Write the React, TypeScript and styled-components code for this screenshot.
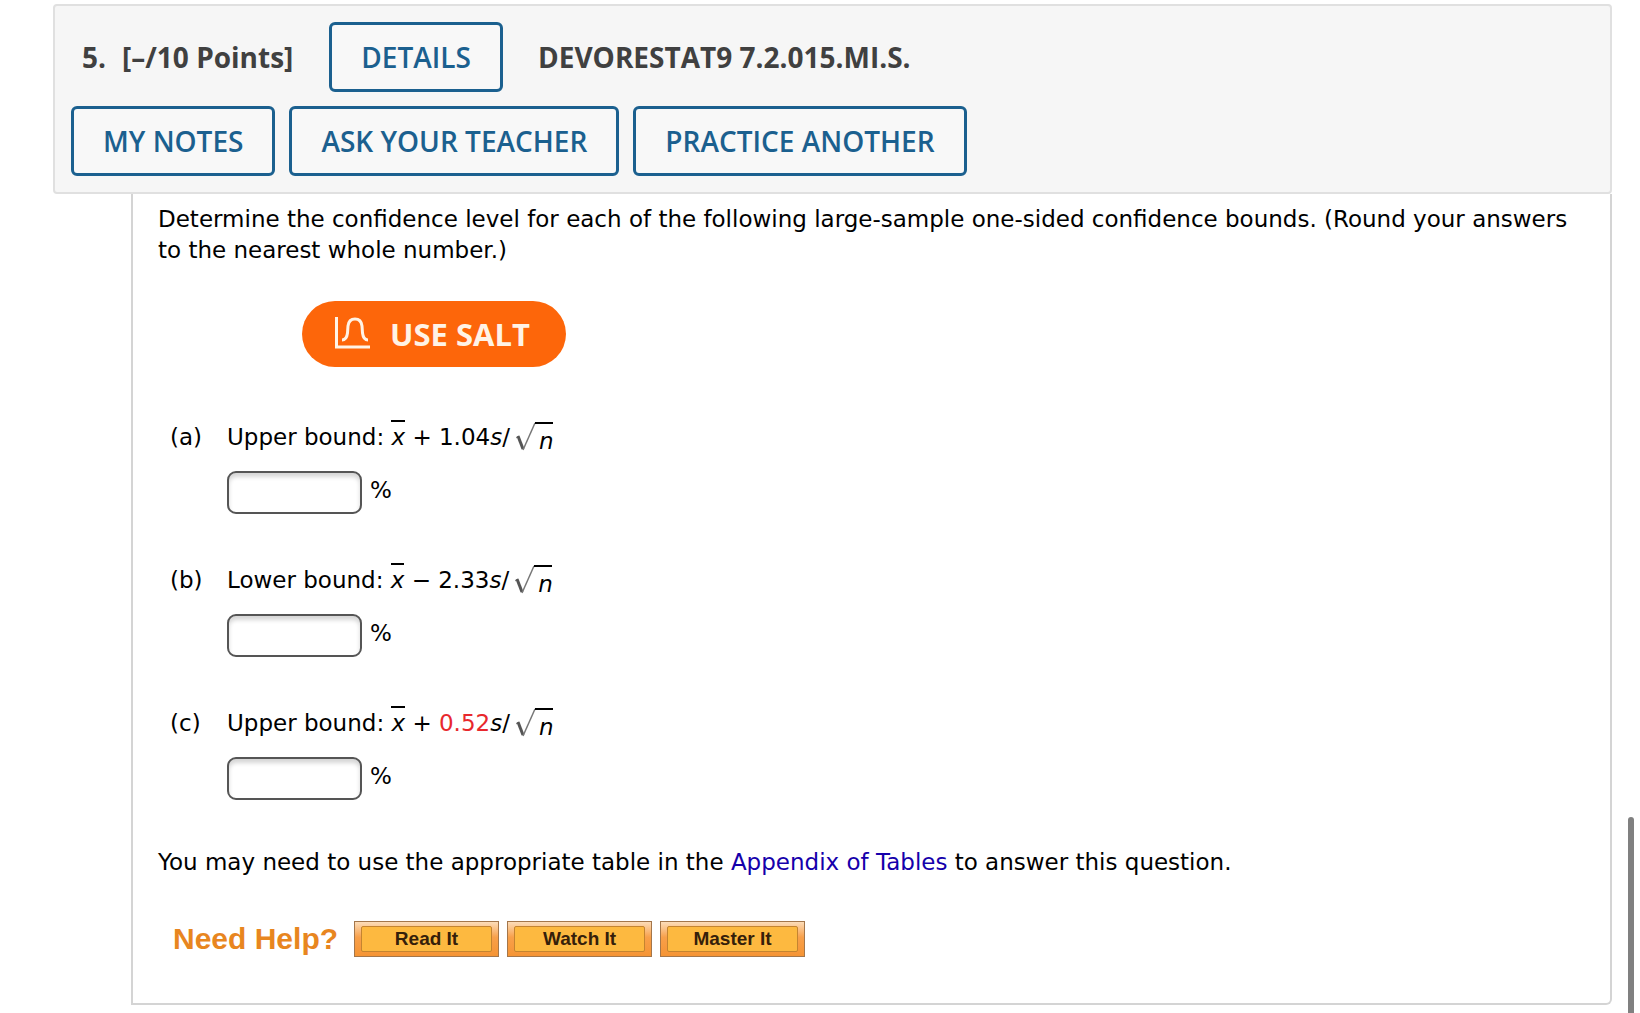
import React, { useId } from "react";
import styled, { createGlobalStyle } from "styled-components";

const GlobalStyle = createGlobalStyle`
  *, *::before, *::after { box-sizing: border-box; }
  body {
    margin: 0;
    background: #fff;
    color: #000;
    font: 23px/31px Verdana, "DejaVu Sans", sans-serif;
  }
`;

const Page = styled.main`
  padding: 4px 28px 8px 53px;
`;

const Header = styled.header`
  display: flex;
  flex-direction: column;
  gap: 14px;
  padding: 16px;
  border: 2px solid #e0e0e0;
  border-radius: 4px;
  background: #f6f6f6;
  font-family: "Open Sans", sans-serif;
`;

const TitleRow = styled.div`
  display: flex;
  flex-wrap: wrap;
  align-items: center;
  padding-left: 11px;
  color: #404040;
  font-size: 28px;
  font-weight: 700;
`;

const QuestionNumber = styled.span`
  margin-right: 16px;
`;

const Points = styled.span`
  margin-right: 36px;
`;

const QuestionCode = styled.h2`
  margin: 0 0 0 35px;
  font-size: 28px;
  font-weight: 700;
`;

const ActionRow = styled.div`
  display: flex;
  flex-wrap: wrap;
  gap: 14px;
`;

const OutlineButton = styled.button`
  height: 70px;
  padding: 0 29px;
  border: 3px solid #1b608f;
  border-radius: 6px;
  background: #f8f8f8;
  color: #1b608f;
  font: 600 28px/32px "Open Sans", sans-serif;
`;

const Body = styled.section`
  margin-left: 78px;
  padding: 10px 24px 46px 25px;
  border: 2px solid #d4d4d4;
  border-top: 0;
  border-radius: 0 0 6px 0;
`;

const Paragraph = styled.p`
  margin: 0;
`;

const SaltButton = styled.button`
  display: flex;
  align-items: center;
  gap: 20px;
  height: 66px;
  margin: 35px 0 50px 144px;
  padding: 0 36px 0 32px;
  border: 0;
  border-radius: 33px;
  background: #fd660a;
  color: #fff3e6;
  font: 700 31px/32px "Open Sans", sans-serif;
`;

const PartList = styled.div`
  display: flex;
  flex-direction: column;
  gap: 46px;
  padding-left: 12px;
`;

const PartRow = styled.div`
  display: grid;
  grid-template-columns: 57px 1fr;
`;

const PartContent = styled.div`
  display: flex;
  flex-direction: column;
  gap: 14px;
`;

const Formula = styled.label`
  display: block;
  height: 40px;
  line-height: 40px;
  white-space: nowrap;
`;

const PartName = styled.span`
  line-height: 40px;
`;

const Mean = styled.i`
  position: relative;
  &::before {
    content: "";
    position: absolute;
    left: 0;
    right: 0;
    top: -4px;
    border-top: 2px solid #000;
  }
`;

const Randomized = styled.span`
  color: #e8282d;
`;

const Root = styled.span`
  position: relative;
  display: inline-block;
  padding-left: 29px;
  line-height: 32px;
  vertical-align: -4px;
  svg {
    position: absolute;
    left: 5px;
    top: -3px;
  }
`;

const AnswerRow = styled.div`
  display: flex;
  gap: 8px;
`;

const AnswerInput = styled.input`
  width: 135px;
  height: 43px;
  padding: 0 8px;
  border: 2px solid #555;
  border-radius: 9px;
  background: #fff;
  box-shadow: inset 0 4px 4px #d6d6d6;
  font: inherit;
`;

const Unit = styled.span`
  line-height: 38px;
`;

const TableNote = styled.p`
  margin: 47px 0 43px;
  a { color: #1500ab; text-decoration: none; }
`;

const HelpRow = styled.div`
  display: flex;
  flex-wrap: wrap;
  align-items: center;
  gap: 8px;
  padding-left: 15px;
  font-family: "Liberation Sans", Arial, sans-serif;
`;

const HelpLabel = styled.strong`
  margin: 0 8px 2px 0;
  color: #e8861f;
  font-size: 30px;
`;

const HelpButton = styled.button`
  width: 145px;
  height: 36px;
  padding: 4px 6px;
  border: 1px solid #a4764a;
  background: linear-gradient(#fcdcb8, #f8a04a 45%, #f59434);
`;

const HelpFace = styled.span`
  display: block;
  border: 1px solid #c48430;
  border-radius: 2px;
  background: #fdb940;
  color: #35200a;
  font: 700 19px/24px "Liberation Sans", Arial, sans-serif;
`;

const ScrollThumb = styled.div`
  position: fixed;
  top: 817px;
  right: 6px;
  bottom: 0;
  width: 6px;
  border-radius: 3px 3px 0 0;
  background: #808080;
`;

function CurveIcon() {
  return (
    <svg width="36" height="34" viewBox="0 0 36 34" fill="none" stroke="#fff3e6" strokeWidth="3" aria-hidden="true">
      <path d="M2.5 0v30H36" />
      <path d="M8 23c4 0 5-3 5.500-7l.5-7c.5-4.500 2.500-7 7-7s6.500 2.500 7 7l.5 7c.5 4 1.500 7 5.500 7" />
    </svg>
  );
}

function SquareRoot() {
  return (
    <Root>
      <svg width="40" height="30" viewBox="0 0 40 30" fill="none" aria-hidden="true">
        <path d="M1 16l3-2" stroke="#777" strokeWidth="1" />
        <path d="M3 14l5 13" stroke="#555" strokeWidth="3" />
        <path d="M8 28L20 1" stroke="#777" strokeWidth="1.500" />
        <path d="M20 1h18" stroke="#000" strokeWidth="2" />
      </svg>
      <i>n</i>
    </Root>
  );
}

type PartProps = {
  name: string;
  bound: string;
  sign: string;
  factor: string;
  randomized?: boolean;
};

function Part({ name, bound, sign, factor, randomized }: PartProps) {
  const id = useId();
  return (
    <PartRow>
      <PartName>({name})</PartName>
      <PartContent>
        <Formula htmlFor={id}>
          {bound} bound: <Mean>x</Mean> {sign} {randomized ? <Randomized>{factor}</Randomized> : factor}
          <i>s</i>/<SquareRoot />
        </Formula>
        <AnswerRow>
          <AnswerInput id={id} type="text" />
          <Unit>%</Unit>
        </AnswerRow>
      </PartContent>
    </PartRow>
  );
}

export default function App() {
  return (
    <>
      <GlobalStyle />
      <Page>
        <Header>
          <TitleRow>
            <QuestionNumber>5.</QuestionNumber>
            <Points>[–/10 Points]</Points>
            <OutlineButton type="button">DETAILS</OutlineButton>
            <QuestionCode>DEVORESTAT9 7.2.015.MI.S.</QuestionCode>
          </TitleRow>
          <ActionRow>
            <OutlineButton type="button">MY NOTES</OutlineButton>
            <OutlineButton type="button">ASK YOUR TEACHER</OutlineButton>
            <OutlineButton type="button">PRACTICE ANOTHER</OutlineButton>
          </ActionRow>
        </Header>
        <Body>
          <Paragraph>
            Determine the confidence level for each of the following large-sample one-sided confidence bounds. (Round
            your answers to the nearest whole number.)
          </Paragraph>
          <SaltButton type="button">
            <CurveIcon />
            USE SALT
          </SaltButton>
          <PartList>
            <Part name="a" bound="Upper" sign="+" factor="1.04" />
            <Part name="b" bound="Lower" sign="−" factor="2.33" />
            <Part name="c" bound="Upper" sign="+" factor="0.52" randomized />
          </PartList>
          <TableNote>
            You may need to use the appropriate table in the <a href="#appendix">Appendix of Tables</a> to answer this
            question.
          </TableNote>
          <HelpRow>
            <HelpLabel>Need Help?</HelpLabel>
            {["Read It", "Watch It", "Master It"].map((text) => (
              <HelpButton type="button" key={text}>
                <HelpFace>{text}</HelpFace>
              </HelpButton>
            ))}
          </HelpRow>
        </Body>
      </Page>
      <ScrollThumb />
    </>
  );
}
